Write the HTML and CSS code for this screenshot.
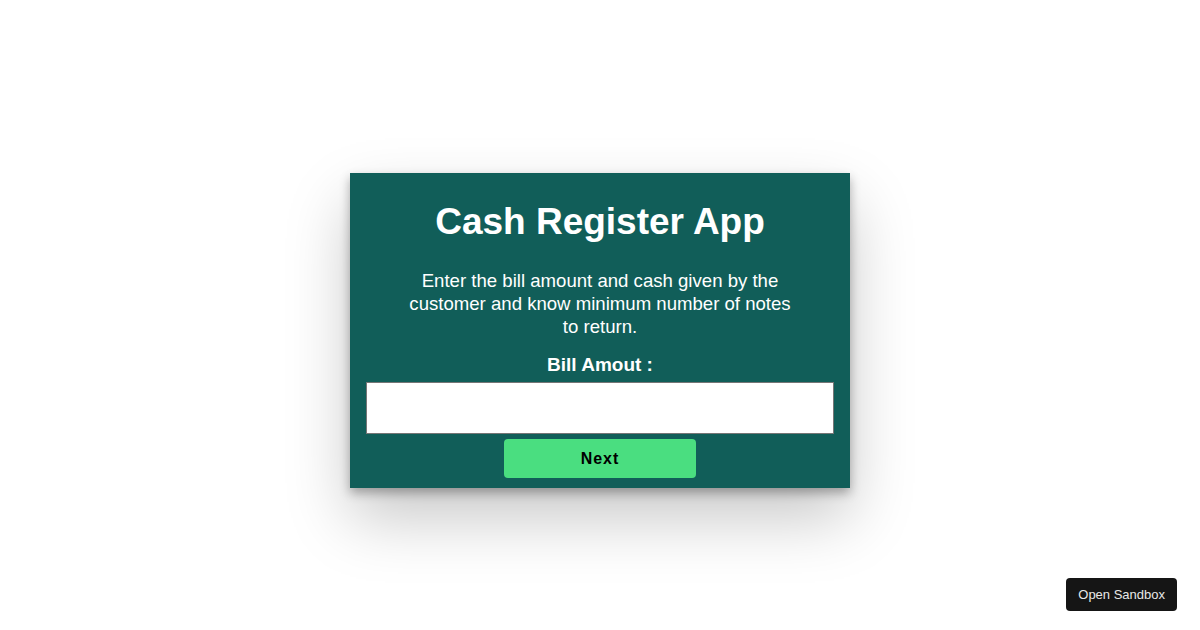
FILE: index.html
```html
<!DOCTYPE html>
<html lang="en">
<head>
    <meta charset="UTF-8">
    <meta name="viewport" content="width=device-width, initial-scale=1.0">
    <title>Cash Register App</title>
    <link rel="stylesheet" href="styles.css">
</head>
<body>
    <main class="page">
        <div class="register_box">
            <h1 class="title">Cash Register App</h1>
            <p class="intro">Enter the bill amount and cash given by the customer and know minimum number of notes to return.</p>
            <label class="field_label" for="bill-amount">Bill Amout :</label>
            <input class="field_input" id="bill-amount" type="number">
            <button class="next_btn" type="button">Next</button>
        </div>
    </main>
    <a href="#" class="sandbox_link">Open Sandbox</a>
</body>
</html>
```

FILE: styles.css
```css
* { margin: 0; padding: 0; box-sizing: border-box; }
body {
    font-family: "Liberation Sans", Arial, sans-serif;
    background: #fff;
}
.page {
    min-height: 100vh;
    display: flex;
    justify-content: center;
    align-items: flex-start;
    padding-top: 173px;
}
.register_box {
    width: 500px;
    background: #115e59;
    color: #fff;
    display: flex;
    flex-direction: column;
    align-items: center;
    padding: 28px 16px 10px;
    box-shadow: 0 5px 10px rgba(0, 0, 0, 0.3), 0 30px 60px rgba(0, 0, 0, 0.22);
}
.register_box .title {
    font-size: 37px;
    font-weight: 700;
    line-height: 41px;
}
.register_box .intro {
    max-width: 392px;
    margin: 27px 0 15px;
    font-size: 18.6px;
    line-height: 23px;
    text-align: center;
}
.register_box .field_label {
    font-size: 19px;
    font-weight: 700;
    line-height: 23px;
    margin-bottom: 6px;
}
.register_box .field_input {
    width: 100%;
    height: 52px;
    border: 1px solid #767676;
    background: #fff;
    font-size: 18px;
    padding: 0 10px;
    outline: none;
}
.register_box .next_btn {
    margin-top: 5px;
    width: 192px;
    height: 39px;
    border: none;
    border-radius: 4px;
    background: #4ade80;
    color: #000;
    font-family: "Liberation Sans", Arial, sans-serif;
    font-size: 16px;
    font-weight: 700;
    letter-spacing: 1px;
    cursor: pointer;
}
.sandbox_link {
    position: fixed;
    right: 23px;
    bottom: 19px;
    padding: 9px 12px;
    border-radius: 4px;
    background: #151515;
    color: #e8e8e8;
    font-size: 13px;
    line-height: 15px;
    text-decoration: none;
}
```
